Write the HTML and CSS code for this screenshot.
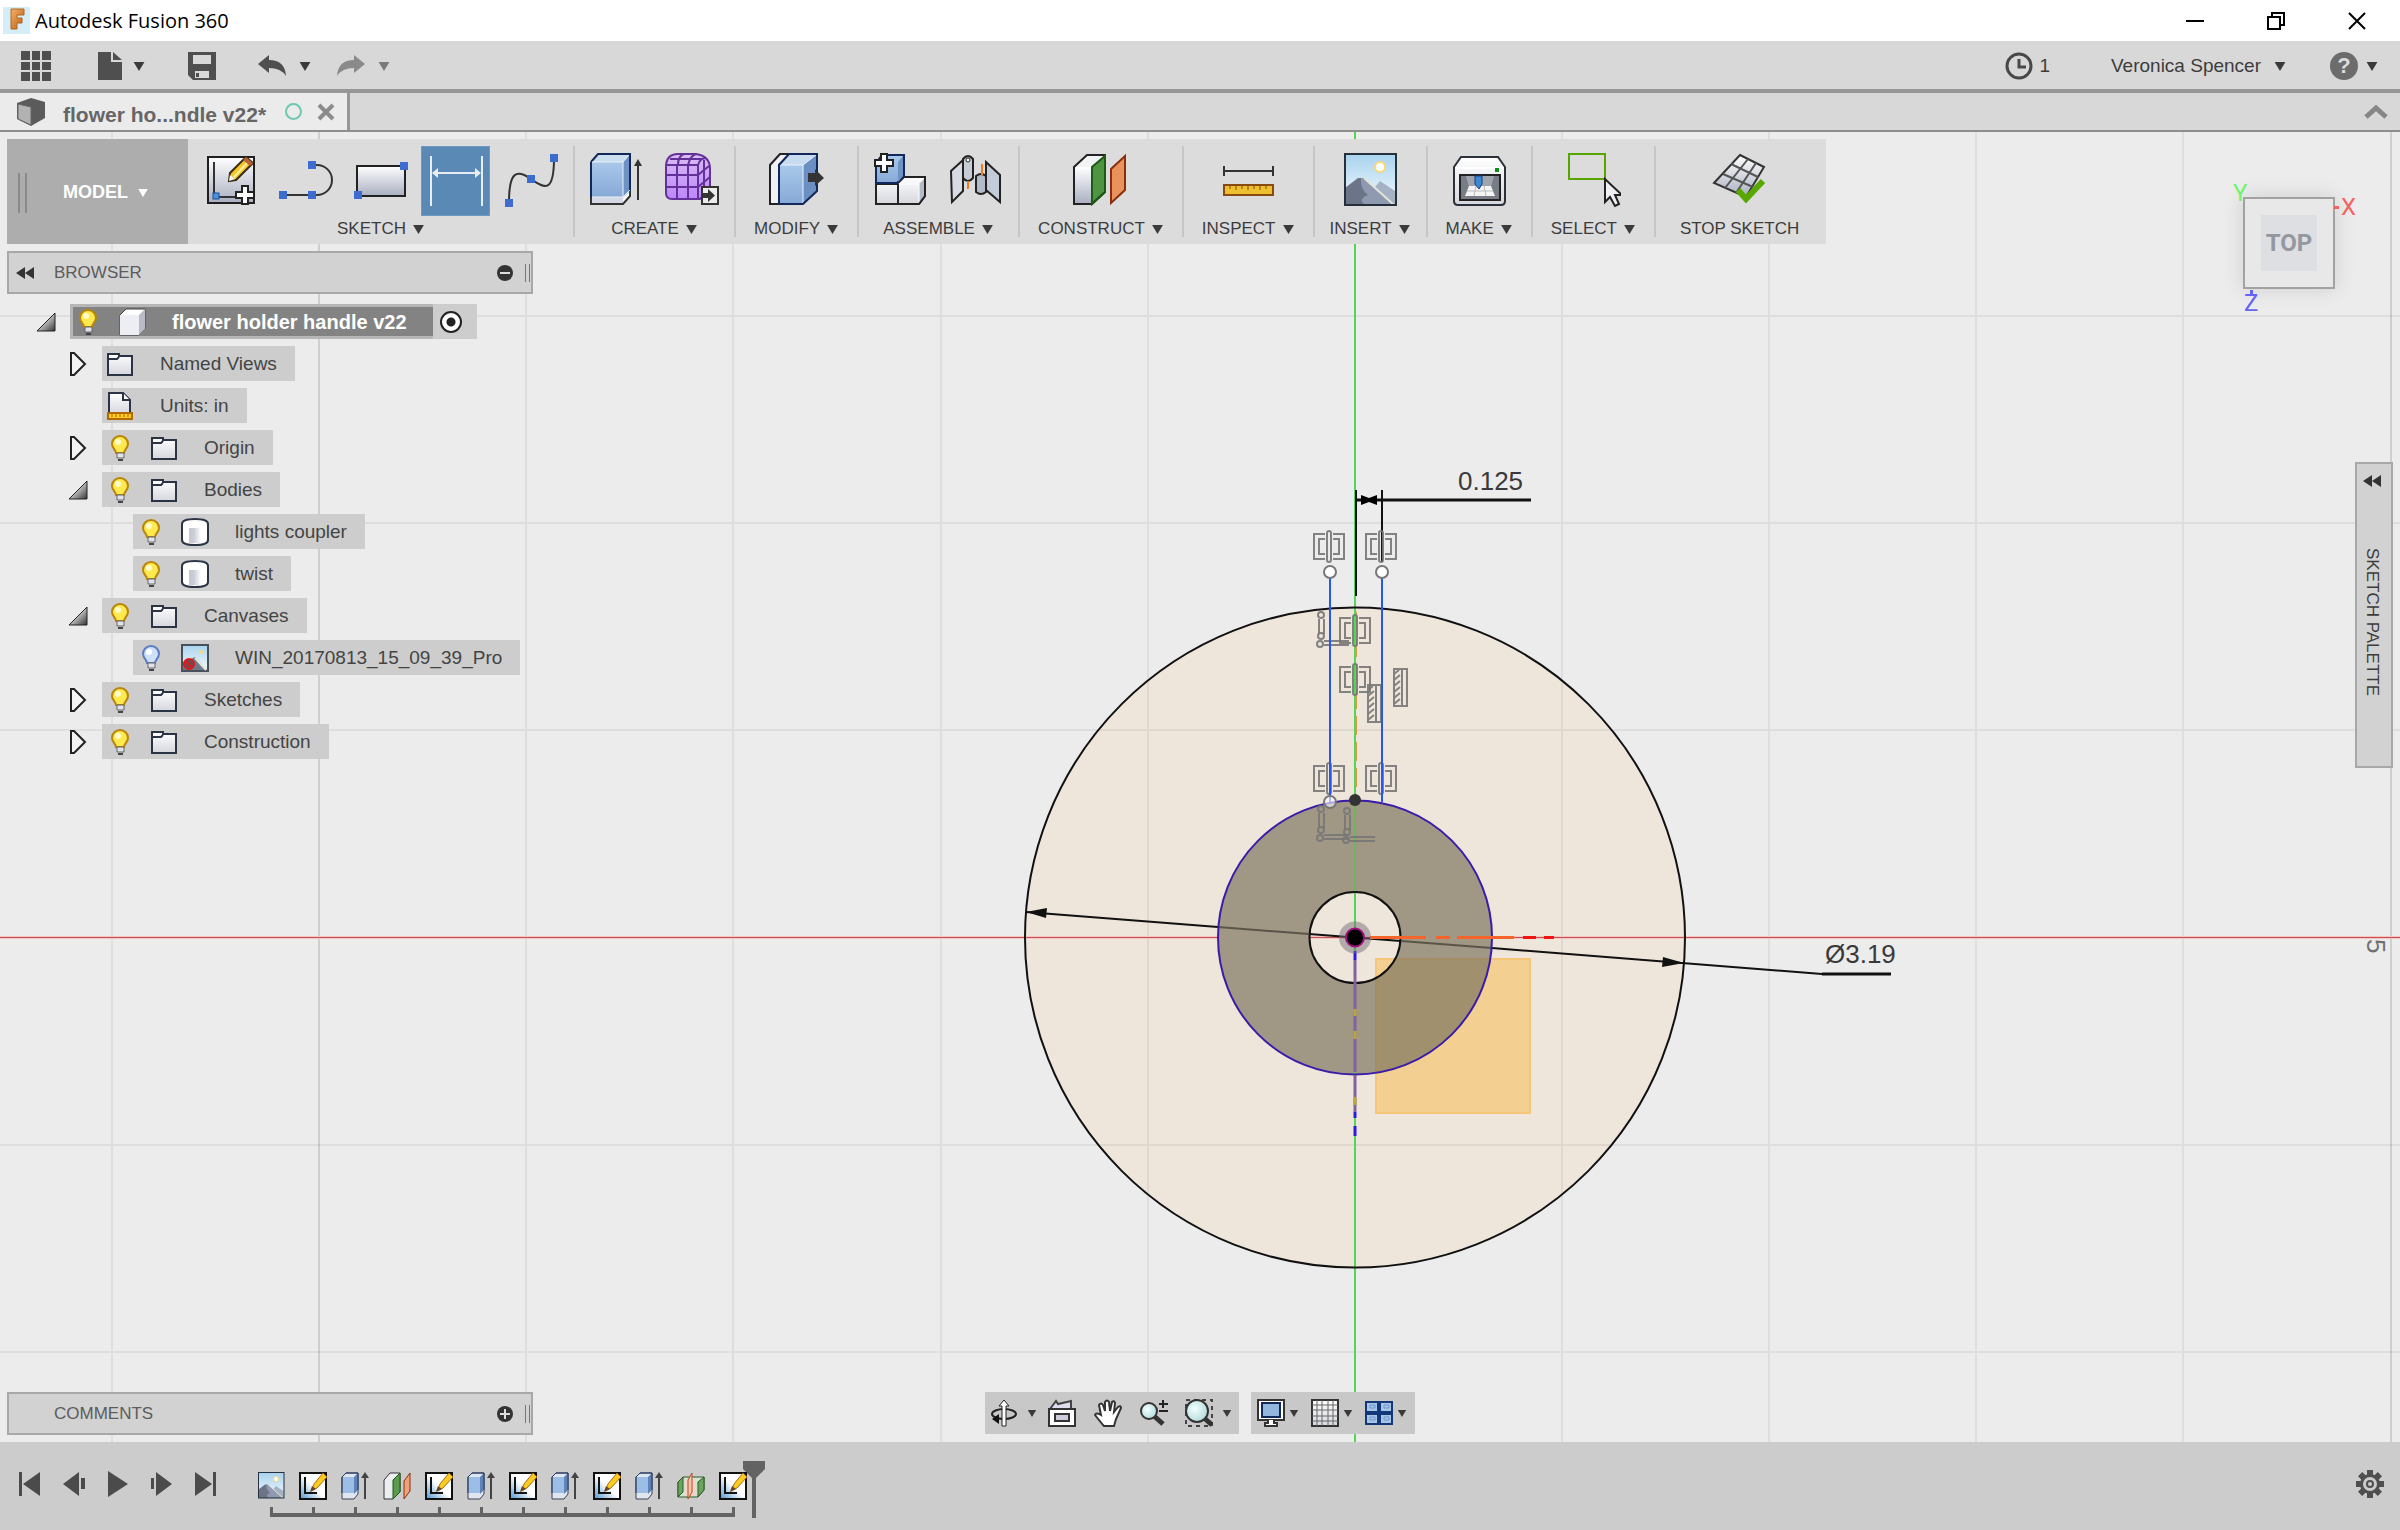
FILE: index.html
```html
<!DOCTYPE html>
<html lang="en">
<head>
<meta charset="utf-8">
<title>Autodesk Fusion 360</title>
<link rel="stylesheet" href="styles.css">
</head>
<body>
<svg class="defs" aria-hidden="true">
  <defs>
    <linearGradient id="gGrey" x1="0" y1="0" x2="0" y2="1"><stop offset="0" stop-color="#fff"/><stop offset="1" stop-color="#a9afc0"/></linearGradient>
    <linearGradient id="gSoft" x1="0" y1="0" x2="0" y2="1"><stop offset="0" stop-color="#fff"/><stop offset="1" stop-color="#d5d7de"/></linearGradient>
    <linearGradient id="gBlue" x1="0" y1="0" x2="0" y2="1"><stop offset="0" stop-color="#a9c8ea"/><stop offset="1" stop-color="#86a9d6"/></linearGradient>
    <linearGradient id="gSky" x1="0" y1="0" x2="0" y2="1"><stop offset="0" stop-color="#a9d3ee"/><stop offset="1" stop-color="#f4fbff"/></linearGradient>
    <linearGradient id="gPurple" x1="0" y1="0" x2="0" y2="1"><stop offset="0" stop-color="#d9bdf5"/><stop offset="1" stop-color="#bd86fb"/></linearGradient>
    <linearGradient id="gTri" x1="0" y1="0" x2="1" y2="1"><stop offset=".3" stop-color="#eee"/><stop offset="1" stop-color="#333"/></linearGradient>
    <linearGradient id="gCyl" x1="0" y1="0" x2="1" y2="0"><stop offset="0" stop-color="#c3c8d2"/><stop offset=".4" stop-color="#c9cdd6"/><stop offset="1" stop-color="#fff"/></linearGradient>
    <linearGradient id="gPage" x1="0" y1="1" x2="1" y2="0"><stop offset="0" stop-color="#4f94cf"/><stop offset=".5" stop-color="#fff"/></linearGradient>
    <radialGradient id="gLens" cx=".4" cy=".4" r=".6"><stop offset="0" stop-color="#f4ffff"/><stop offset="1" stop-color="#b5dcdc"/></radialGradient>
    <linearGradient id="gLogo" x1="0" y1="0" x2="1" y2="1"><stop offset="0" stop-color="#f6b266"/><stop offset="1" stop-color="#b95a10"/></linearGradient>
  </defs>
  <symbol id="down" viewBox="0 0 12 10"><path d="M0 0H12L6 10Z" fill="currentColor"/></symbol>

  <symbol id="create-sketch" viewBox="0 0 56 56"><rect x="5" y="4" width="46" height="46" fill="url(#gGrey)" stroke="#1f1f1f" stroke-width="2"/><path d="M11 9V44H46" fill="none" stroke="#333" stroke-width="2"/><rect x="10" y="40" width="6" height="6" fill="#4a90e2" stroke="#1d4f91"/><path d="M26 28L27 20L43 4L50 10L33 27Z" fill="#f6c528" stroke="#3a2a10" stroke-width="2"/><path d="M31 24L46 8" stroke="#fff2a0" stroke-width="2"/><path d="M43 4L50 10L47 13L40 7Z" fill="#b5633a"/><path d="M26 28L27 22L32 26Z" fill="#fff"/><path d="M39 33H45V39H51V45H45V51H39V45H33V39H39Z" fill="#fff" stroke="#222" stroke-width="2"/></symbol>
  <symbol id="line" viewBox="0 0 56 56"><path d="M6 42H39A15 15 0 0 0 39 12H34" fill="none" stroke="#333" stroke-width="2"/><path d="M30 8h8v8h-8zM1 38h8v8H1zM30 38h8v8h-8z" fill="#3d6bd0"/></symbol>
  <symbol id="rect" viewBox="0 0 56 56"><rect x="4" y="13" width="48" height="30" fill="url(#gGrey)" stroke="#222" stroke-width="2"/><path d="M47 9h8v8h-8zM1 38h8v8H1z" fill="#3d6bd0"/></symbol>
  <symbol id="dimension" viewBox="0 0 56 56"><path d="M3 3V53M54 3V53M5 20H52" stroke="#e6edf3" stroke-width="2"/><path d="M4 20L10 15V25ZM53 20L47 15V25Z" fill="#e6edf3"/></symbol>
  <symbol id="spline" viewBox="0 0 56 56"><path d="M6 49C6 18 14 16 28 26S51 40 51 5" fill="none" stroke="#333" stroke-width="2"/><path d="M2 46h8v8H2zM24 22h8v8h-8zM47 1h8v8h-8z" fill="#3d6bd0"/></symbol>
  <symbol id="extrude" viewBox="0 0 56 56"><path d="M2 9L9 1H41V43L34 51H2Z" fill="#cdddf0"/><path d="M2 9H34V44H2Z" fill="url(#gBlue)"/><path d="M34 9L41 1V38L34 45Z" fill="#6f92c4"/><path d="M3 44H34V51H3Z" fill="#d5d9e4"/><path d="M34 45L41 38V43L34 51Z" fill="#fff"/><path d="M2 9L9 1H41V38M2 9V44" fill="none" stroke="#12285a" stroke-width="2"/><path d="M2 44V51H34L41 43V38" fill="none" stroke="#333" stroke-width="2"/><path d="M3 9H34V44M34 9L40 2M3 44H34L41 37" stroke="#e7f1fb" fill="none"/><path d="M49 47V10" stroke="#333" stroke-width="2"/><path d="M49 6L53 13H45Z" fill="#333"/></symbol>
  <symbol id="form" viewBox="0 0 56 56"><path d="M2 14Q2 1 14 1H32Q46 3 46 16V36L36 46H8Q2 46 2 40Z" fill="url(#gPurple)" stroke="#64309a" stroke-width="2"/><path d="M2 22H34M2 34H34M13 12V46M24 12V46M34 12V46M3 12H34Q36 5 42 5M14 12Q14 3 20 1M24 12Q26 3 32 1M6 6H39M34 22L45 13M34 34L46 24M40 7V41" fill="none" stroke="#64309a" stroke-width="2"/><rect x="38" y="34" width="16" height="17" fill="#ececec" stroke="#333" stroke-width="2"/><path d="M38 40H44V36L51 42.500L44 49V45H38Z" fill="#333"/></symbol>
  <symbol id="presspull" viewBox="0 0 56 56"><path d="M2 12L12 1H22L11 12V51H2Z" fill="#f0f1f4" stroke="#222" stroke-width="2"/><path d="M11 12L21 1H49V38L35 51H11Z" fill="#c9dcef"/><path d="M11 12H35V51H11Z" fill="url(#gBlue)"/><path d="M35 12L49 1V38L35 51Z" fill="#6b8fc3"/><path d="M12 12H35V50M35 12L48 2" fill="none" stroke="#e7f1fb"/><path d="M11 12L21 1H49V38L35 51H11Z" fill="none" stroke="#12285a" stroke-width="2"/><path d="M40 20H47V16L56 25L47 33V29H40Z" fill="#333"/></symbol>
  <symbol id="component" viewBox="0 0 56 56"><path d="M3 31H24L31 24H52V43L46 51H3Z" fill="url(#gSoft)" stroke="#222" stroke-width="2"/><path d="M25 31V51" fill="none" stroke="#222" stroke-width="2"/><path d="M46 31L52 25V43L46 51Z" fill="#b4bac6"/><path d="M26 31H46V50" fill="none" stroke="#fff" stroke-width="1"/><path d="M52 25V43L46 51" fill="none" stroke="#222" stroke-width="2"/><path d="M3 10L9 2H31V23L24 30H3Z" fill="url(#gBlue)" stroke="#12285a" stroke-width="2"/><path d="M25 9L30 3V23L25 29Z" fill="#6f92c4"/><path d="M8 1H14V7H20V13H14V19H8V13H2V7H8Z" fill="#fff" stroke="#222" stroke-width="2"/></symbol>
  <symbol id="joint" viewBox="0 0 56 56"><path d="M3 18L15 7V38L4 49Z" fill="#d7dbe2" stroke="#222" stroke-width="2"/><path d="M15 6Q20 0 25 6V25Q20 31 15 25Z" fill="#c8ccd4" stroke="#222" stroke-width="2"/><circle cx="20" cy="7" r="2" fill="#fff" stroke="#222"/><path d="M28 23Q33 19 38 23V39Q33 43 28 39Z" fill="#b4bbc8" stroke="#222" stroke-width="2"/><path d="M38 9L52 22V49L38 37Z" fill="#c3cbd8" stroke="#222" stroke-width="2"/><path d="M20 28V36M34 11V22" stroke="#f37a1f" stroke-width="2"/></symbol>
  <symbol id="construct" viewBox="0 0 56 56"><path d="M2 14L15 2H33V39L20 51H2Z" fill="#f2f3f5"/><path d="M2 14H20V51H2Z" fill="url(#gGrey)"/><path d="M20 14L33 2V39L20 51Z" fill="#4f9440"/><path d="M2 14L15 2H33V39L20 51H2Z" fill="none" stroke="#222" stroke-width="2"/><path d="M20 14V51L33 39V3Z" fill="none" stroke="#1d5a16" stroke-width="2"/><path d="M39 16L53 3V37L39 50Z" fill="#e9925c" stroke="#8b2e0d" stroke-width="2"/></symbol>
  <symbol id="inspect" viewBox="0 0 56 56"><path d="M4 18H53M4 13V23M53 13V23" stroke="#333" stroke-width="2"/><rect x="4" y="32" width="49" height="10" fill="#ecc02e" stroke="#8a4b10" stroke-width="2"/><path d="M10 32v4M16 32v5M22 32v4M28 32v5M34 32v4M40 32v5M46 32v4" stroke="#8a4b10"/></symbol>
  <symbol id="picture" viewBox="0 0 56 56"><rect x="3" y="2" width="50" height="50" fill="url(#gSky)"/><circle cx="38" cy="14" r="5" fill="#fff" stroke="#f8d877" stroke-width="2"/><path d="M28 40L38 28L53 38V52H30Z" fill="#a5b2c4"/><path d="M3 35L16 25H20L34 36L48 52H3Z" fill="#6c7487"/><path d="M19 25H22L50 51H22Q16 46 26 42Q18 36 19 25Z" fill="#8f9ab0"/><path d="M22 25L52 52" stroke="#e4e4d8" stroke-width="2"/><rect x="3" y="1" width="51" height="51" fill="none" stroke="#26303c" stroke-width="2"/></symbol>
  <symbol id="printer" viewBox="0 0 56 56"><path d="M3 14L10 4H47L54 14V48Q54 52 50 52H7Q3 52 3 48Z" fill="url(#gSoft)" stroke="#2b303a" stroke-width="2"/><path d="M4 15H53" stroke="#fff" stroke-width="2"/><rect x="9" y="22" width="40" height="25" fill="#777c86" stroke="#222" stroke-width="2"/><path d="M15 23H43L40 34H18Z" fill="#9fa4ad"/><path d="M18 33H40L44 43H14Z" fill="#f4f4f4"/><path d="M16 38H42M25 33L23 43M33 33L35 43" stroke="#bbb"/><path d="M24 23H31V31L28 36L24 31Z" fill="#3d8ad4" stroke="#163b78"/><rect x="44" y="15" width="4" height="4" fill="#118a1c"/></symbol>
  <symbol id="select" viewBox="0 0 56 56"><rect x="4" y="1" width="36" height="25" fill="none" stroke="#57a600" stroke-width="2"/><path d="M40 26V49L45 44L50 53L54 51L50 42H57Z" fill="#eef0f4" stroke="#222" stroke-width="2"/></symbol>
  <symbol id="stop" viewBox="0 0 56 56"><path d="M28 2L52 14L34 44L2 30Z" fill="url(#gGrey)" stroke="#333" stroke-width="2"/><path d="M19 11L46 24M11 21L41 34M36 6L13 35M44 10L24 40" stroke="#555" stroke-width="2"/><path d="M26 37L34 46L51 28" fill="none" stroke="#58a800" stroke-width="6"/></symbol>

  <symbol id="bulb" viewBox="0 0 28 28"><path d="M14 2C9 2 6 6 6 10C6 14 10 16 10 19H18C18 16 22 14 22 10C22 6 19 2 14 2Z" fill="#ffe94e" stroke="#b8860b" stroke-width="2"/><circle cx="12" cy="8" r="3" fill="#fffbd0"/><path d="M11 19h7v5h-7z" fill="#dfe2e8" stroke="#666"/><path d="M12 25h5v2h-5z" fill="#444"/></symbol>
  <symbol id="bulb-off" viewBox="0 0 28 28"><path d="M14 2C9 2 6 6 6 10C6 14 10 16 10 19H18C18 16 22 14 22 10C22 6 19 2 14 2Z" fill="#cfe0fb" stroke="#5f7fc0" stroke-width="2"/><circle cx="12" cy="8" r="3" fill="#fff"/><path d="M11 19h7v5h-7z" fill="#dfe2e8" stroke="#666"/><path d="M12 25h5v2h-5z" fill="#444"/></symbol>
  <symbol id="folder" viewBox="0 0 28 28"><path d="M2 4H13V6H26V25H2Z" fill="url(#gSoft)" stroke="#2a3444" stroke-width="2"/><path d="M2 9H11L13 7" fill="none" stroke="#2a3444" stroke-width="2"/></symbol>
  <symbol id="cube" viewBox="0 0 28 28"><path d="M2 7L8 1H27V21L21 27H2Z" fill="#fff" stroke="#444" stroke-width="1"/><path d="M2 7H21V27H2Z" fill="#eceef3"/><path d="M21 7L27 1V21L21 27Z" fill="#b9bcc8"/></symbol>
  <symbol id="body" viewBox="0 0 28 28"><path d="M1 6Q1 1 14 1T27 6V22Q27 27 14 27T1 22Z" fill="#fff" stroke="#2a3444" stroke-width="2"/><path d="M8 10H20V25H8Z" fill="url(#gCyl)"/></symbol>
  <symbol id="units" viewBox="0 0 28 28"><path d="M3 1H17L24 8V22H3Z" fill="url(#gSoft)" stroke="#2a3444" stroke-width="2"/><path d="M17 1V8H24" fill="#fff" stroke="#2a3444" stroke-width="2"/><path d="M2 21H26V27H2Z" fill="#ffc928" stroke="#b06a00" stroke-width="2"/><path d="M6 21v4M10 21v4M14 21v4M18 21v4M22 21v4" stroke="#b06a00"/></symbol>
  <symbol id="canvas-off" viewBox="0 0 28 28"><rect x="1" y="1" width="26" height="26" fill="url(#gSky)" stroke="#48505c" stroke-width="2"/><circle cx="20" cy="8" r="2" fill="#f8d877"/><path d="M2 26V18L14 13L26 26Z" fill="#6d7a8c"/><path d="M14 14L25 26" stroke="#e4e4d8" stroke-width="2"/><circle cx="8" cy="20" r="5" fill="#6d4a52" stroke="#e01818" stroke-width="2"/><path d="M4 17L12 24" stroke="#e01818" stroke-width="2"/></symbol>
  <symbol id="open" viewBox="0 0 20 20"><path d="M19 1V19H1Z" fill="url(#gTri)" stroke="#222"/></symbol>
  <symbol id="closed" viewBox="0 0 20 26"><path d="M3 2H6L17 13L6 24H3Z" fill="#f4f4f4" stroke="#222" stroke-width="2"/></symbol>

  <symbol id="t-sketch" viewBox="0 0 28 28"><rect x="1" y="1" width="26" height="26" fill="url(#gPage)" stroke="#111" stroke-width="2"/><path d="M6 5V21H18" fill="none" stroke="#111" stroke-width="2"/><path d="M12 19L15 12L24 1L28 5L18 16Z" fill="#fccb1f" stroke="#a86a14"/><path d="M11 20L13 14L17 17Z" fill="#6b4423"/></symbol>
  <symbol id="t-extrude" viewBox="0 0 28 28"><path d="M1 5L5 1H17V22L13 27H1Z" fill="#dfe6f0" stroke="#3a4152"/><path d="M2 5H13V21H2Z" fill="#9bbde6"/><path d="M13 5L17 1V18L13 22Z" fill="#5e83b9"/><path d="M1 21V5L5 1H17V18" fill="none" stroke="#1c3768"/><path d="M24 27V5" stroke="#444" stroke-width="2"/><path d="M24 0L28 6H20Z" fill="#444"/></symbol>
  <symbol id="t-plane" viewBox="0 0 28 28"><path d="M1 8L7 1H17V20L10 27H1Z" fill="#eceef1" stroke="#333"/><path d="M10 8L17 1V20L10 27Z" fill="#5c9a4d" stroke="#1d5a16"/><path d="M21 9L27 1V19L21 27Z" fill="#eea277" stroke="#8b2e0d"/></symbol>
  <symbol id="t-mid" viewBox="0 0 28 28"><path d="M1 10L6 5H27V18L21 25H1Z" fill="#d4e0d0" stroke="#2d5a26"/><path d="M1 10L6 5V20L1 25ZM21 10L27 5V18L21 25Z" fill="#6aa45d" stroke="#2d5a26"/><path d="M8 8H18V24H8Z" fill="#f6d3c4"/><path d="M11 8L15 1V20L11 27Z" fill="#f3c6b0" stroke="#b24a20"/></symbol>
</svg>

<header class="titlebar">
  <svg class="logo" viewBox="0 0 27 27"><rect width="27" height="27" fill="#d5edf8"/><path d="M8 2H21V8H14V11H19V16H14V22H8Z" fill="url(#gLogo)" stroke="#b3651c" stroke-width="1"/></svg>
  <h1>Autodesk Fusion 360</h1>
  <div class="winbtns">
    <button aria-label="Minimize"><svg width="18" height="18"><path d="M0 9H18" stroke="#000" stroke-width="2"/></svg></button>
    <button aria-label="Restore"><svg width="18" height="18"><path d="M1 5H13V17H1ZM5 5V1H17V13H13" fill="none" stroke="#000" stroke-width="2"/></svg></button>
    <button aria-label="Close"><svg width="18" height="18"><path d="M1 1L17 17M17 1L1 17" stroke="#000" stroke-width="2"/></svg></button>
  </div>
</header>

<nav class="quickbar" aria-label="Quick access">
  <button class="q-grid" aria-label="Data panel"><svg width="30" height="30"><path d="M0 0h9v9H0zM11 0h8v9h-8zM21 0h9v9h-9zM0 11h9v8H0zM11 11h8v8h-8zM21 11h9v8h-9zM0 21h9v9H0zM11 21h8v9h-8zM21 21h9v9h-9z" fill="#4f4f4f"/></svg></button>
  <button class="q-file" aria-label="File"><svg width="24" height="30"><path d="M0 1H13V11H24V29H0ZM15 1L24 9H15Z" fill="#4f4f4f"/></svg><svg class="arr"><use href="#down"/></svg></button>
  <button class="q-save" aria-label="Save"><svg width="28" height="28"><path fill-rule="evenodd" d="M0 0H28V28H5L0 23ZM5 3V12H23V3ZM7 19V26H21V19ZM8 21H11V25H8Z" fill="#4f4f4f"/></svg></button>
  <button class="q-undo" aria-label="Undo"><svg width="28" height="22"><path d="M0 9L11 0V5Q27 5 28 21Q23 13 11 13V18Z" fill="#4f4f4f"/></svg><svg class="arr"><use href="#down"/></svg></button>
  <button class="q-redo" aria-label="Redo"><svg width="28" height="22"><path d="M28 9L17 0V5Q1 5 0 21Q5 13 17 13V18Z" fill="#8a8a8a"/></svg><svg class="arr"><use href="#down"/></svg></button>
  <div class="account">
    <button class="jobs" aria-label="Job status"><svg width="28" height="28"><circle cx="14" cy="14" r="12" fill="none" stroke="#484848" stroke-width="3"/><path d="M14 7V15H21" fill="none" stroke="#484848" stroke-width="3"/></svg><span>1</span></button>
    <button class="user">Veronica Spencer<svg class="arr"><use href="#down"/></svg></button>
    <button class="help" aria-label="Help"><span class="q">?</span><svg class="arr"><use href="#down"/></svg></button>
  </div>
</nav>

<div class="tabbar">
  <div class="tab">
    <svg width="28" height="28"><path d="M0 5L14 0L28 4V20L14 28L0 21Z" fill="#5b5b5b"/><path d="M1 6L14 9V27L1 21Z" fill="#b2b2b2" stroke="#666"/></svg>
    <a href="#doc">flower ho...ndle v22*</a>
    <i class="dot"></i>
    <button aria-label="Close tab"><svg width="18" height="18"><path d="M2 2L16 16M16 2L2 16" stroke="#8b8b8b" stroke-width="4"/></svg></button>
  </div>
  <button class="collapse" aria-label="Collapse"><svg width="24" height="16"><path d="M2 13L12 4L22 13" fill="none" stroke="#868686" stroke-width="5"/></svg></button>
</div>

<main class="workspace" id="doc">
  <svg class="scene" viewBox="0 132 2400 1310" preserveAspectRatio="xMidYMid slice">
    <circle cx="1355" cy="937.500" r="330" fill="#eee6db"/>
    <path d="M112 132V1442M526 132V1442M733 132V1442M941 132V1442M1148 132V1442M1562 132V1442M1769 132V1442M1976 132V1442M2183 132V1442M0 316H2400M0 523H2400M0 730H2400M0 1145H2400M0 1352H2400" stroke="#000" stroke-opacity=".06" stroke-width="2"/>
    <path d="M319 132V1442M2391 132V1442" stroke="#000" stroke-opacity=".12" stroke-width="2"/>
    <rect x="1376" y="959" width="154" height="154" fill="#f8b73c" fill-opacity=".46" stroke="#f5c67a" stroke-width="2"/>
    <path fill-rule="evenodd" d="M1218 937.500a137 137 0 1 0 274 0a137 137 0 1 0 -274 0M1309.500 937.500a45.500 45.500 0 1 0 91 0a45.500 45.500 0 1 0 -91 0" fill="#7b725b" fill-opacity=".68"/>
    <path d="M0 937.500H1218M1309 937.500H1401M1492 937.500H2400" stroke="#efc6c4" stroke-width="3"/><path d="M0 937.500H1218M1309 937.500H1401M1492 937.500H2400" stroke="#d24f4f"/>
    <path d="M1355 132V803M1355 890V985M1355 1073V1442" stroke="#55d455" stroke-width="2"/>
    <path d="M1355 803V890M1355 985V1073" stroke="#72b45c" stroke-width="2"/>
    <g fill="none" stroke="#111" stroke-width="2">
      <circle cx="1355" cy="937.500" r="330"/><circle cx="1355" cy="937.500" r="45.500"/>
      <path d="M1026 912L1218 927M1309 934L1401 941M1492 948L1822 974H1891"/>
    </g>
    <path d="M1218 927L1309 934M1401 941L1492 948" stroke="#5b5548" stroke-width="2"/>
    <circle cx="1355" cy="937.500" r="137" fill="none" stroke="#3a1ca8" stroke-width="2"/>
    <path d="M1026 912L1047 908L1046 918ZM1684 963L1663 957L1662 967Z" fill="#111"/>
    <path d="M1822 974H1891M1357 500H1531" stroke="#111" stroke-width="3"/>
    <path d="M1370 937.500H1426M1436 937.500H1450M1457 937.500H1514" stroke="#f5642a" stroke-width="3"/>
    <path d="M1523 937.500H1536M1544 937.500H1554" stroke="#f01414" stroke-width="3"/>
    <path d="M1355 951V960M1355 1112V1118M1355 1126V1136" stroke="#2a1ce0" stroke-width="3"/>
    <path d="M1355 960V1072M1355 1075V1112" stroke="#8262a0" stroke-width="3"/>
    <path d="M1355 1009V1016M1355 1031V1039M1355 1097V1105" stroke="#b8aa38" stroke-width="3"/>
    <circle cx="1355" cy="937.500" r="16" fill="#77707a" fill-opacity=".5"/><circle cx="1355" cy="937.500" r="9" fill="#000" stroke="#a0107c" stroke-width="2"/>
    <path d="M1356 612V800" stroke="#d99a45" stroke-width="2" stroke-dasharray="19 7"/>
    <path d="M1356 490V596M1382 490V562" stroke="#111" stroke-width="2"/>
    <path d="M1361 495L1369 498L1377 495V505L1369 502L1361 505Z" fill="#000"/>
    <g fill="none" stroke="#777" stroke-opacity=".9" stroke-width="2">
      <g id="sym"><path d="M1325 534H1314V559H1325M1325 539H1319V554H1325M1333 534H1344V559H1333M1333 539H1339V554H1333"/><rect x="1327" y="531" width="4" height="31" rx="2"/></g>
      <use href="#sym" x="52"/><use href="#sym" x="26" y="84"/><use href="#sym" x="26" y="133"/><use href="#sym" y="232"/><use href="#sym" x="52" y="232"/>
      <g id="perp"><circle cx="1321" cy="615" r="3"/><path d="M1319 619V634M1324 619V634M1324 641H1349M1324 645H1349"/><circle cx="1321" cy="636" r="3"/><circle cx="1320" cy="644" r="3"/></g>
      <use href="#perp" y="194"/><use href="#perp" x="26" y="196"/>
      <g id="par"><path d="M1394 669H1407V706H1394ZM1402 669V706M1394 674L1399 670M1394 680L1400 675M1394 686L1400 681M1394 692L1400 687M1394 698L1400 693M1394 704L1400 699"/></g>
      <use href="#par" x="-26" y="16"/>
    </g>
    <path d="M1330 578V802M1382 578V802" stroke="#2458f0" stroke-width="2"/>
    <g fill="#fff" stroke="#777" stroke-width="2"><circle cx="1330" cy="572" r="6"/><circle cx="1382" cy="572" r="6"/><circle cx="1330" cy="802" r="6" fill-opacity=".6"/></g>
    <circle cx="1355" cy="800" r="6" fill="#333"/>
    <g class="scene-text"><text x="1458" y="490">0.125</text><text x="1825" y="963">Ø3.19</text><text class="scale" transform="translate(2367 939) rotate(90)">5</text></g>
  </svg>

  <section class="toolbar" aria-label="Toolbar">
    <button class="model"><i class="grip"></i><span>MODEL</span><svg class="arr"><use href="#down"/></svg></button>
    <div class="group"><div class="tools"><button aria-label="Create sketch"><svg><use href="#create-sketch"/></svg></button><button aria-label="Line"><svg><use href="#line"/></svg></button><button aria-label="Rectangle"><svg><use href="#rect"/></svg></button><button class="on" aria-label="Dimension"><svg><use href="#dimension"/></svg></button><button aria-label="Spline"><svg><use href="#spline"/></svg></button></div><button class="menu">SKETCH<svg class="arr"><use href="#down"/></svg></button></div>
    <div class="group"><div class="tools"><button aria-label="Extrude"><svg><use href="#extrude"/></svg></button><button aria-label="Form"><svg><use href="#form"/></svg></button></div><button class="menu">CREATE<svg class="arr"><use href="#down"/></svg></button></div>
    <div class="group"><div class="tools"><button aria-label="Press pull"><svg><use href="#presspull"/></svg></button></div><button class="menu">MODIFY<svg class="arr"><use href="#down"/></svg></button></div>
    <div class="group"><div class="tools"><button aria-label="New component"><svg><use href="#component"/></svg></button><button aria-label="Joint"><svg><use href="#joint"/></svg></button></div><button class="menu">ASSEMBLE<svg class="arr"><use href="#down"/></svg></button></div>
    <div class="group"><div class="tools"><button aria-label="Offset plane"><svg><use href="#construct"/></svg></button></div><button class="menu">CONSTRUCT<svg class="arr"><use href="#down"/></svg></button></div>
    <div class="group"><div class="tools"><button aria-label="Measure"><svg><use href="#inspect"/></svg></button></div><button class="menu">INSPECT<svg class="arr"><use href="#down"/></svg></button></div>
    <div class="group tight"><div class="tools"><button aria-label="Attached canvas"><svg><use href="#picture"/></svg></button></div><button class="menu">INSERT<svg class="arr"><use href="#down"/></svg></button></div>
    <div class="group"><div class="tools"><button aria-label="3D print"><svg><use href="#printer"/></svg></button></div><button class="menu">MAKE<svg class="arr"><use href="#down"/></svg></button></div>
    <div class="group"><div class="tools"><button aria-label="Window select"><svg><use href="#select"/></svg></button></div><button class="menu">SELECT<svg class="arr"><use href="#down"/></svg></button></div>
    <div class="group last"><div class="tools"><button aria-label="Finish sketch"><svg><use href="#stop"/></svg></button></div><button class="menu">STOP SKETCH</button></div>
  </section>

  <div class="middle">
    <aside class="browser">
      <header class="panel"><button aria-label="Collapse browser"><svg width="18" height="12"><path d="M9 0V12L0 6ZM18 0V12L9 6Z" fill="#333"/></svg></button><h2>BROWSER</h2><button class="round" aria-label="Minimize browser"><svg width="16" height="16"><circle cx="8" cy="8" r="8" fill="#333"/><path d="M3 8H13" stroke="#ddd" stroke-width="2"/></svg></button><i class="grip"></i></header>
      <ul class="tree">
        <li><button class="tg" aria-label="Collapse"><svg width="20" height="20"><use href="#open"/></svg></button><span class="node root"><svg><use href="#bulb"/></svg><svg><use href="#cube"/></svg><b>flower holder handle v22</b></span><label class="active"><input type="radio" name="active" checked aria-label="Activate component"></label></li>
        <li class="l1"><button class="tg" aria-label="Expand"><svg width="20" height="26"><use href="#closed"/></svg></button><span class="node"><svg><use href="#folder"/></svg><b>Named Views</b></span></li>
        <li class="l1"><span class="tg"></span><span class="node"><svg><use href="#units"/></svg><b>Units: in</b></span></li>
        <li class="l1"><button class="tg" aria-label="Expand"><svg width="20" height="26"><use href="#closed"/></svg></button><span class="node"><svg><use href="#bulb"/></svg><svg><use href="#folder"/></svg><b>Origin</b></span></li>
        <li class="l1"><button class="tg" aria-label="Collapse"><svg width="20" height="20"><use href="#open"/></svg></button><span class="node"><svg><use href="#bulb"/></svg><svg><use href="#folder"/></svg><b>Bodies</b></span></li>
        <li class="l2"><span class="tg"></span><span class="node"><svg><use href="#bulb"/></svg><svg><use href="#body"/></svg><b>lights coupler</b></span></li>
        <li class="l2"><span class="tg"></span><span class="node"><svg><use href="#bulb"/></svg><svg><use href="#body"/></svg><b>twist</b></span></li>
        <li class="l1"><button class="tg" aria-label="Collapse"><svg width="20" height="20"><use href="#open"/></svg></button><span class="node"><svg><use href="#bulb"/></svg><svg><use href="#folder"/></svg><b>Canvases</b></span></li>
        <li class="l2"><span class="tg"></span><span class="node"><svg><use href="#bulb-off"/></svg><svg><use href="#canvas-off"/></svg><b>WIN_20170813_15_09_39_Pro</b></span></li>
        <li class="l1"><button class="tg" aria-label="Expand"><svg width="20" height="26"><use href="#closed"/></svg></button><span class="node"><svg><use href="#bulb"/></svg><svg><use href="#folder"/></svg><b>Sketches</b></span></li>
        <li class="l1"><button class="tg" aria-label="Expand"><svg width="20" height="26"><use href="#closed"/></svg></button><span class="node"><svg><use href="#bulb"/></svg><svg><use href="#folder"/></svg><b>Construction</b></span></li>
      </ul>
    </aside>
    <button class="palette"><svg width="18" height="12"><path d="M9 0V12L0 6ZM18 0V12L9 6Z" fill="#333"/></svg><span>SKETCH PALETTE</span></button>
  </div>

  <div class="viewcube"><span class="ax y">Y</span><span class="ax x">X</span><span class="ax z">Z</span><button>TOP</button></div>

  <div class="lower">
    <header class="panel comments"><h2>COMMENTS</h2><button class="round" aria-label="Expand comments"><svg width="16" height="16"><circle cx="8" cy="8" r="8" fill="#333"/><path d="M3 8H13M8 3V13" stroke="#ddd" stroke-width="2"/></svg></button><i class="grip"></i></header>
    <div class="navbars">
      <div class="navbar nav-a">
        <button class="orbit" aria-label="Orbit"><svg width="28" height="28"><ellipse cx="14" cy="15" rx="12" ry="5" fill="none" stroke="#222" stroke-width="2"/><path d="M12 27V7H9L14 1L19 7H16V27Z" fill="#fff" stroke="#222"/><path d="M2 20L9 15V25Z" fill="#111"/></svg><svg class="arr"><use href="#down"/></svg></button>
        <button aria-label="Look at"><svg width="30" height="28"><path d="M3 10L9 2L11 5L24 2V9" fill="#dde" stroke="#444" stroke-width="2"/><rect x="2" y="10" width="26" height="17" fill="#fff" stroke="#333" stroke-width="2"/><rect x="8" y="15" width="14" height="7" fill="#ccd" stroke="#333" stroke-width="2"/></svg></button>
        <button aria-label="Pan"><svg width="28" height="28"><path d="M9 26L1 16Q2 13 7 16L5 6Q7 3 9 6L11 12V3Q13 0 15 3L16 12L18 3Q20 1 21 4L20 13L24 8Q27 6 27 9L22 20L20 27H10Z" fill="#fff" stroke="#333" stroke-width="2"/></svg></button>
        <button aria-label="Zoom"><svg width="30" height="28"><path d="M15 17L24 25" stroke="#333" stroke-width="5"/><circle cx="10" cy="12" r="8" fill="url(#gLens)" stroke="#333" stroke-width="2"/><path d="M20 5H29M24 1V9M20 12H29" stroke="#222" stroke-width="2"/></svg></button>
        <button class="fit" aria-label="Fit"><svg width="28" height="28"><rect x="1" y="1" width="26" height="26" fill="none" stroke="#444" stroke-width="2" stroke-dasharray="4 4"/><path d="M18 18L27 26" stroke="#333" stroke-width="5"/><circle cx="12" cy="12" r="11" fill="url(#gLens)" stroke="#333" stroke-width="2"/></svg><svg class="arr"><use href="#down"/></svg></button>
      </div>
      <div class="navbar nav-b">
        <button aria-label="Display settings"><svg width="28" height="28"><rect x="1" y="1" width="26" height="20" fill="#fff" stroke="#333" stroke-width="2"/><rect x="5" y="4" width="18" height="14" fill="#93b6df" stroke="#12285a" stroke-width="2"/><path d="M11 21V24H8V27H20V24H17V21" fill="#fff" stroke="#333" stroke-width="2"/></svg><svg class="arr"><use href="#down"/></svg></button>
        <button aria-label="Grid and snaps"><svg width="28" height="28"><rect x="1" y="1" width="26" height="26" fill="url(#gSoft)" stroke="#333" stroke-width="2"/><path d="M6 1V27M11 1V27M17 1V27M22 1V27M1 6H27M1 11H27M1 17H27M1 22H27" stroke="#666" stroke-width="1"/></svg><svg class="arr"><use href="#down"/></svg></button>
        <button aria-label="Viewports"><svg width="28" height="24"><path d="M1 1H13V11H1ZM15 1H27V11H15ZM1 13H13V23H1ZM15 13H27V23H15Z" fill="#a8c4e6" stroke="#12387a" stroke-width="2"/><path d="M5 4h5v3H5zM19 4h5v3h-5zM5 16h5v3H5zM19 16h5v3h-5z" fill="#a8c4e6" stroke="#6f95cc"/></svg><svg class="arr"><use href="#down"/></svg></button>
      </div>
    </div>
  </div>
</main>

<footer class="timeline">
  <div class="play">
    <button aria-label="Go to start"><svg width="22" height="26"><path d="M0 1H3V25H0ZM21 1V25L4 13Z" fill="#4b4b4b"/></svg></button>
    <button aria-label="Step back"><svg width="22" height="26"><path d="M16 1V25L0 13ZM18 7H22V18H18Z" fill="#4b4b4b"/></svg></button>
    <button aria-label="Play"><svg width="22" height="26"><path d="M1 0V26L21 13Z" fill="#4b4b4b"/></svg></button>
    <button aria-label="Step forward"><svg width="22" height="26"><path d="M5 1V25L21 13ZM0 7H3V18H0Z" fill="#4b4b4b"/></svg></button>
    <button aria-label="Go to end"><svg width="22" height="26"><path d="M0 1V25L17 13ZM18 1H21V25H18Z" fill="#4b4b4b"/></svg></button>
  </div>
  <ol class="features">
    <li><svg><use href="#picture"/></svg></li><li><svg><use href="#t-sketch"/></svg></li><li><svg><use href="#t-extrude"/></svg></li><li><svg><use href="#t-plane"/></svg></li><li><svg><use href="#t-sketch"/></svg></li><li><svg><use href="#t-extrude"/></svg></li><li><svg><use href="#t-sketch"/></svg></li><li><svg><use href="#t-extrude"/></svg></li><li><svg><use href="#t-sketch"/></svg></li><li><svg><use href="#t-extrude"/></svg></li><li><svg><use href="#t-mid"/></svg></li><li><svg><use href="#t-sketch"/></svg></li>
  </ol>
  <svg class="marker" width="22" height="57"><path d="M0 0H22V8L13 17V57H9V17L0 8Z" fill="#636363"/></svg>
  <button class="gear" aria-label="Settings"><svg width="28" height="28" viewBox="-14 -14 28 28"><g fill="#4f4f4f"><path id="tooth" d="M-3 -14H3V14H-3Z"/><use href="#tooth" transform="rotate(45)"/><use href="#tooth" transform="rotate(90)"/><use href="#tooth" transform="rotate(135)"/><circle r="10"/></g><circle r="7" fill="#ccc"/><circle r="4" fill="#4f4f4f"/><circle r="2" fill="#ccc"/></svg></button>
</footer>
</body>
</html>
```
FILE: styles.css
```css
* { box-sizing: border-box; }
body {
  margin: 0;
  min-height: 100vh;
  display: flex;
  flex-direction: column;
  background: #ececec;
  color: #3c3c3c;
  font-family: "Liberation Sans", Arial, sans-serif;
  font-size: 19px;
}
button {
  display: flex;
  align-items: center;
  margin: 0;
  padding: 0;
  border: 0;
  background: none;
  color: inherit;
  font: inherit;
}
h1, h2, ul, ol { margin: 0; padding: 0; font-weight: 400; list-style: none; }
svg { display: block; flex: none; }
.defs { position: absolute; width: 0; height: 0; }
.arr { width: 12px; height: 9px; color: #3a3a3a; }

/* window title */
.titlebar { display: flex; align-items: center; height: 41px; padding: 0 3px; background: #fff; }
.logo { width: 27px; height: 27px; margin-right: 5px; }
h1 { font: 20px/28px "Open Sans", "Noto Sans", sans-serif; color: #000; }
.winbtns { display: flex; margin-left: auto; }
.winbtns button { width: 81px; height: 38px; justify-content: center; }

/* quick access */
.quickbar { display: flex; align-items: center; height: 52px; padding: 2px 22px 0 21px; background: #d8d8d8; border-bottom: 4px solid #979797; }
.quickbar button { gap: 11px; }
.q-file { margin-left: 47px; }
.q-save { margin-left: 43px; }
.quickbar .q-undo { margin-left: 42px; gap: 13px; }
.quickbar .q-redo { margin-left: 26px; gap: 13px; }
.q-redo .arr { color: #7a7a7a; }
.account { display: flex; align-items: center; margin-left: auto; }
.account .jobs { gap: 6px; margin-right: 61px; }
.account .user { gap: 13px; margin-right: 44px; }
.account .help { gap: 8px; }
.q { width: 28px; height: 28px; border-radius: 50%; background: #6c6c6c; color: #dcdcdc; font-weight: 700; font-size: 22px; line-height: 28px; }

/* document tabs */
.tabbar { display: flex; align-items: center; height: 39px; padding-right: 12px; background: #d8d8d8; border-bottom: 2px solid #8e8e8e; }
.tab { display: flex; align-items: center; height: 37px; padding: 0 12px 0 17px; background: #ebebeb; border-right: 3px solid #979797; }
.tab a { margin: 6px 19px 0 18px; color: #666; font-size: 21px; font-weight: 700; line-height: 24px; text-decoration: none; }
.dot { width: 17px; height: 17px; margin-right: 15px; border: 2px solid #6cc8b0; border-radius: 50%; }
.collapse { margin-left: auto; }

/* workspace */
.workspace { position: relative; flex: 1; display: flex; flex-direction: column; padding: 7px; }
.scene { position: absolute; inset: 0; width: 100%; height: 100%; }
.scene-text { font-size: 26px; fill: #3a3a3a; }
.scale { fill: #707070; }
.toolbar { position: relative; display: flex; align-self: flex-start; height: 105px; background: #dcdcdc; }
.model { width: 181px; padding-top: 2px; background: #adadad; color: #fff; font-size: 18px; font-weight: 700; }
.model .grip { width: 9px; height: 40px; margin: 0 36px 0 11px; border: solid #8a8a8a; border-width: 0 2px; }
.model .arr { margin-left: 10px; color: #fff; width: 10px; height: 8px; }
.group { position: relative; display: flex; flex-direction: column; align-items: center; padding: 7px 1px 0 0; }
.group::after { content: ""; position: absolute; right: -1px; top: 7px; bottom: 7px; width: 2px; background: #c6c6c6; }
.group.last { padding: 7px 8px 0 6px; }
.group.last::after { display: none; }
.tools { display: flex; gap: 6px; padding: 0 8px; }
.tools button { width: 69px; height: 70px; justify-content: center; }
.tools svg { width: 56px; height: 56px; overflow: visible; }
.tools .on { background: #5989b4; box-shadow: inset 0 0 0 1px #6e9ac0; }
.menu { gap: 7px; padding: 3px 19px 0; font-size: 17px; line-height: 20px; white-space: nowrap; }
.tight .menu { padding: 3px 16px 0; }
.menu .arr { width: 11px; height: 9px; }

.middle { position: relative; flex: 1; display: flex; justify-content: space-between; align-items: flex-start; padding-top: 7px; }
.browser { width: 526px; }
.panel { position: relative; display: flex; align-items: center; width: 526px; height: 43px; padding: 0 1px 0 7px; background: #d2d2d2; border: 2px solid #a8a8a8; }
.panel h2 { margin-left: 20px; color: #5c5c5c; font-size: 17px; }
.panel .round { margin-left: auto; margin-right: 12px; }
.panel .grip { width: 5px; height: 18px; border: solid #777; border-width: 0 1px; }
.comments h2 { margin-left: 38px; }
.tree { display: flex; flex-direction: column; gap: 7px; margin-top: 10px; }
.tree li { display: flex; align-items: center; height: 35px; padding-left: 29px; }
.tree .l1 { padding-left: 61px; }
.tree .l2 { padding-left: 92px; }
.tg { width: 34px; }
.node { display: flex; align-items: center; gap: 16px; height: 35px; padding: 0 18px 0 4px; background: #cdcdcd; }
.node svg { width: 28px; height: 28px; }
.node b { margin-left: 10px; color: #444; font-weight: 400; line-height: 24px; }
.node.root { padding: 0 26px 0 1px; background: #838383; border: solid #b6b6b6; border-width: 3px 0 3px 3px; }
.root b { color: #fff; font-size: 20px; font-weight: 700; }
.active { display: flex; align-items: center; width: 44px; height: 35px; padding-left: 7px; background: #cdcdcd; }
.active input { appearance: none; width: 22px; height: 22px; margin: 0; border: 2px solid #222; border-radius: 50%; background: radial-gradient(circle, #222 4px, #fff 5px); }

.palette { width: 38px; height: 306px; margin-top: 211px; padding: 11px 4px 0 0; flex-direction: column; gap: 61px; background: #d2d2d2; border: 2px solid #a8a8a8; }
.palette span { writing-mode: vertical-rl; font-size: 17px; line-height: 20px; }

.viewcube { position: absolute; top: 65px; right: 65px; width: 92px; height: 92px; padding: 16px; background: #e8e8e8; border: 2px solid #a2a2a2; box-shadow: 0 0 20px rgba(0, 0, 0, .12); }
.viewcube button { width: 56px; height: 56px; justify-content: center; background: #dedfe3; color: #92989e; font: 700 24px/56px "Liberation Sans Narrow", "Roboto", sans-serif; }
.ax { position: absolute; font: 24px/24px "Liberation Sans Narrow", "Roboto", sans-serif; }
.ax.y { left: -12px; top: -18px; color: #6cf56c; }
.ax.x { right: -23px; top: -4px; color: #f56262; }
.ax.x::before { content: ""; position: absolute; left: -7px; top: 11px; width: 5px; height: 3px; background: #f56262; }
.ax.z { left: -1px; bottom: -28px; color: #6464f5; }
.ax.z::before { content: ""; position: absolute; left: 6px; top: -1px; width: 3px; height: 5px; background: #6464f5; }

.lower { position: relative; display: grid; grid-template-columns: 1fr auto 1fr; align-items: start; }
.navbars { display: flex; gap: 12px; }
.navbar { display: flex; align-items: center; height: 42px; background: #c8c8c8; }
.nav-a button { justify-content: center; width: 46px; }
.nav-a .orbit { justify-content: flex-start; width: 54px; padding-left: 5px; gap: 9px; }
.nav-a .fit { justify-content: flex-start; width: 62px; padding-left: 8px; gap: 9px; }
.nav-b { padding-right: 2px; }
.nav-b button { gap: 4px; padding: 0 6px; }
.navbar .arr { width: 10px; height: 7px; }

/* timeline */
.timeline { display: flex; align-items: flex-start; height: 88px; padding-right: 16px; background: #ccc; }
.play { display: flex; gap: 22px; padding: 29px 0 0 19px; }
.features { position: relative; display: flex; gap: 14px; margin-left: 40px; padding-top: 30px; }
.features::after { content: ""; position: absolute; left: 13px; right: 13px; bottom: 0; height: 4px; background: #636363; }
.features li { display: flex; flex-direction: column; align-items: center; gap: 7px; }
.features li::after { content: ""; width: 3px; height: 10px; background: #636363; }
.features svg { width: 28px; height: 28px; }
.marker { margin: 19px 0 0 -4px; }
.gear { margin: 28px 0 0 auto; }
```
